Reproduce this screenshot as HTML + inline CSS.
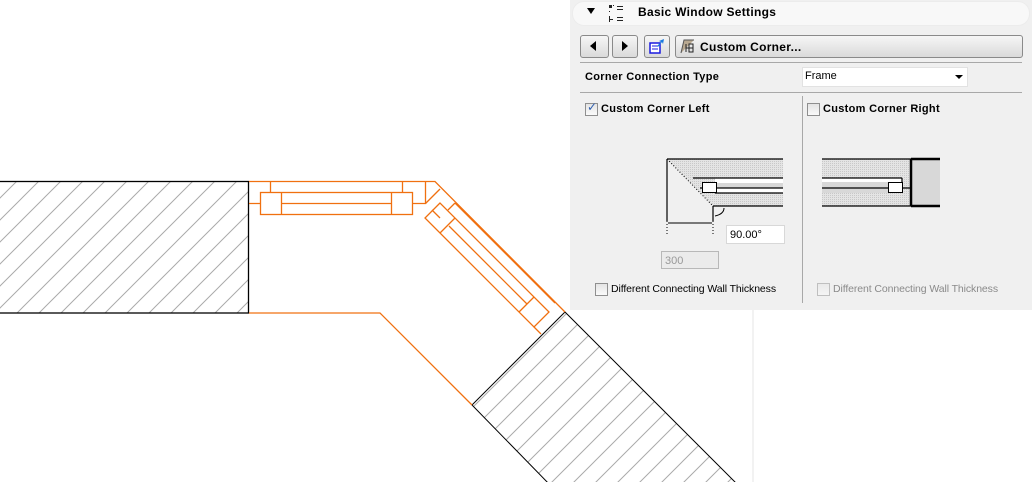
<!DOCTYPE html>
<html><head><meta charset="utf-8"><style>
*{margin:0;padding:0;box-sizing:border-box}
body{width:1032px;height:482px;background:#fff;position:relative;overflow:hidden;font-family:"Liberation Sans",Arial,sans-serif;font-size:11px;color:#000}
.a{position:absolute}
.panel{left:570px;top:0;width:462px;height:310px;background:#f0f0f0}
.hdr{left:572px;top:1px;width:458px;height:25px;background:#f8f8f8;border-radius:12px;border:1px solid #ececec}
.btn{height:23px;top:35px;border:1px solid #8a8a8a;border-radius:3px;background:linear-gradient(#f6f6f6,#dadada)}
.b{font-weight:bold;letter-spacing:0.3px}
.cb{width:13px;height:13px;border:1px solid #8f8f8f;background:linear-gradient(#e4e4e4,#fafafa)}
.hl{height:1px;background:#a8a8a8}
</style></head><body>
<svg class="a" style="left:0;top:0" width="1032" height="482">
<defs>
<pattern id="h" patternUnits="userSpaceOnUse" width="22" height="22"><path d="M0 22L22 0M-5 5L5 -5M17 27L27 17" stroke="#aaa" stroke-width="1"/></pattern>
</defs>
<rect x="-2" y="181.5" width="250.5" height="131.5" fill="url(#h)" stroke="#000" stroke-width="1.3"/>
<polygon points="472,405 565,312 740,487 552,487" fill="url(#h)" stroke="#000" stroke-width="1"/>
<g stroke="#f07010" stroke-width="1.3" fill="none">
<path d="M249 181.5H435L565 312"/>
<path d="M249 313H380L472 405"/>
<path d="M249 203.5H260M413 203.5H425.5V181.5M270.5 181.5V192.5M402.5 181.5V192.5"/>
<rect x="260.5" y="192.5" width="152" height="22"/>
<path d="M281.5 192.5V214.5M391.5 192.5V214.5M281.5 203.5H391.5"/>
<path d="M425.5 203.5L440 189"/>
<path d="M440 203L425 218L534 327L549 312Z"/>
<path d="M440 233L455 218M519 312L534 297M449 226L527 304"/>
<path d="M455 203L549 297M432 210L440 218M448 210L455 203M549 297L555 303M534 327L541 334"/>
</g>
</svg>
<div class="a panel"></div>
<div class="a" style="left:752px;top:310px;width:2px;height:172px;background:#f2f2f2"></div>
<div class="a hdr"></div>
<div class="a" style="left:587px;top:8px;width:0;height:0;border-left:4px solid transparent;border-right:4px solid transparent;border-top:6px solid #000"></div>
<svg class="a" style="left:608px;top:3px" width="22" height="22"><g fill="#222"><rect x="1" y="2" width="3" height="3"/><rect x="5" y="2" width="1" height="1"/><rect x="9" y="3" width="6" height="1"/><rect x="9" y="6" width="6" height="1"/><rect x="1" y="8" width="1" height="1"/><rect x="9" y="14" width="6" height="1"/><rect x="9" y="17" width="6" height="1"/><rect x="1" y="13" width="1" height="6"/><rect x="1" y="16" width="4" height="1"/></g></svg>
<div class="a b" style="left:638px;top:5px;font-size:12px">Basic Window Settings</div>
<div class="a btn" style="left:580px;width:29px"></div>
<div class="a" style="left:590px;top:41px;border-top:5px solid transparent;border-bottom:5px solid transparent;border-right:6px solid #000"></div>
<div class="a btn" style="left:612px;width:26px"></div>
<div class="a" style="left:622px;top:41px;border-top:5px solid transparent;border-bottom:5px solid transparent;border-left:6px solid #000"></div>
<div class="a btn" style="left:644px;width:26px"></div>
<svg class="a" style="left:648px;top:37px" width="18" height="18"><rect x="2" y="6" width="10" height="10" fill="#fff" stroke="#1a1ae0" stroke-width="1.5"/><path d="M4 9h6M4 12h6" stroke="#1a1ae0"/><path d="M9 9L13 5L11 4L16 2L15 7L14 5L10 10Z" fill="#1a7ae0"/></svg>
<div class="a btn" style="left:675px;width:348px"></div>
<svg class="a" style="left:679px;top:38px" width="18" height="18"><path d="M2 15L5 2H15" fill="#b8a890" stroke="#555"/><path d="M7 6V14M7 10H14M10 6H14V14H10Z" stroke="#222" fill="none"/></svg>
<div class="a b" style="left:700px;top:40px;font-size:12px">Custom Corner...</div>
<div class="a hl" style="left:580px;top:62px;width:442px"></div>
<div class="a b" style="left:585px;top:71px">Corner Connection Type</div>
<div class="a" style="left:802px;top:67px;width:166px;height:20px;background:#fff;border:1px solid #e2e2e2"></div>
<div class="a" style="left:805px;top:70px">Frame</div>
<div class="a" style="left:955px;top:75px;border-left:4px solid transparent;border-right:4px solid transparent;border-top:4px solid #000"></div>
<div class="a hl" style="left:580px;top:92px;width:442px"></div>
<div class="a" style="left:802px;top:96px;width:1px;height:207px;background:#a8a8a8"></div>
<div class="a cb" style="left:585px;top:103px"></div>
<div class="a" style="left:587px;top:100px;color:#3060b0;font-size:12px">✓</div>
<div class="a b" style="left:601px;top:103px">Custom Corner Left</div>
<div class="a cb" style="left:807px;top:103px"></div>
<div class="a b" style="left:823px;top:103px">Custom Corner Right</div>
<svg class="a" style="left:660px;top:155px" width="130" height="80">
<defs><pattern id="d" patternUnits="userSpaceOnUse" width="2" height="2"><rect width="2" height="2" fill="#e4e4e4"/><rect width="1" height="1" fill="#c8c8c8"/></pattern></defs>
<polygon points="7,4 123,4 123,51 53,51 26,23" fill="url(#d)"/>
<rect x="55" y="23" width="68" height="15" fill="#fff"/>
<rect x="47" y="28" width="76" height="5" fill="#d8d8d8"/>
<path d="M7 4H123M7 4V66M53 51H123M53 51V66M55 23H123M55 38H123M55 33H123M33 23H55M40 33H45" stroke="#000" stroke-width="1.2" fill="none"/>
<path d="M7 4L53 51" stroke="#000" stroke-dasharray="1,2"/>
<rect x="42.5" y="27.5" width="14" height="10" fill="#fff" stroke="#000"/>
<path d="M7 82V66M53 82V66" stroke="#000" stroke-dasharray="1,2"/>
<path d="M8 68H52" stroke="#000"/>
<path d="M55 61Q64 59 64 53" stroke="#000" fill="none"/>
</svg>
<div class="a" style="left:726px;top:225px;width:59px;height:19px;background:#fff;border:1px solid #d8d8d8;padding:3px 0 0 3px">90.00°</div>
<div class="a" style="left:661px;top:251px;width:58px;height:18px;background:#ebebeb;border:1px solid #b8b8b8;color:#999;padding:3px 0 0 3px">300</div>
<div class="a cb" style="left:595px;top:283px"></div>
<div class="a" style="left:611px;top:283px;font-size:10.5px;letter-spacing:-0.1px">Different Connecting Wall Thickness</div>
<svg class="a" style="left:820px;top:155px" width="125" height="60">
<rect x="2" y="4" width="89" height="47" fill="url(#d)"/>
<rect x="91" y="4" width="29" height="47" fill="#d8d8d8"/>
<rect x="2" y="23" width="80" height="15" fill="#fff"/>
<rect x="2" y="27" width="66" height="11" fill="#d8d8d8"/>
<path d="M2 4H120M2 51H120M91 4V51M2 23H82M2 33H68M82 23V28M82 33H91" stroke="#000" stroke-width="1.2" fill="none"/>
<path d="M91 4V51M91 4H120M91 51H120" stroke="#000" stroke-width="2.5" fill="none"/>
<rect x="68.5" y="27.5" width="14" height="10" fill="#fff" stroke="#000"/>
</svg>
<div class="a cb" style="left:817px;top:283px;opacity:.5"></div>
<div class="a" style="left:833px;top:283px;color:#8a8a8a;font-size:10.5px;letter-spacing:-0.1px">Different Connecting Wall Thickness</div>
</body></html>
